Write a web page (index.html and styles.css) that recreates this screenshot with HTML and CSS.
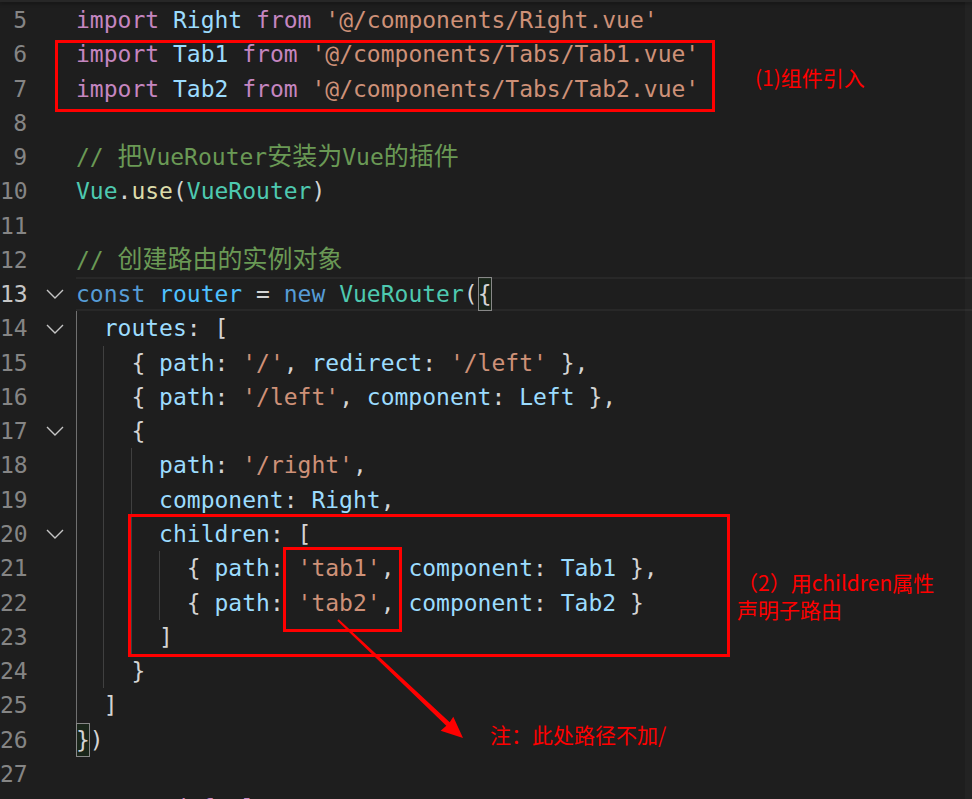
FILE: index.html
```html
<!DOCTYPE html>
<html lang="zh-CN">
<head>
<meta charset="utf-8">
<title>router.js</title>
<link rel="stylesheet" href="styles.css">
</head>
<body>
<div class="editor">
  <div class="lines">
    <div class="line"><span class="ln">5</span><span class="fold"></span><span class="src"><span class="k">import</span> <span class="v">Right</span> <span class="k">from</span> <span class="s">'@/components/Right.vue'</span></span></div>
    <div class="line"><span class="ln">6</span><span class="fold"></span><span class="src"><span class="k">import</span> <span class="v">Tab1</span> <span class="k">from</span> <span class="s">'@/components/Tabs/Tab1.vue'</span></span></div>
    <div class="line"><span class="ln">7</span><span class="fold"></span><span class="src"><span class="k">import</span> <span class="v">Tab2</span> <span class="k">from</span> <span class="s">'@/components/Tabs/Tab2.vue'</span></span></div>
    <div class="line"><span class="ln">8</span><span class="fold"></span><span class="src"></span></div>
    <div class="line"><span class="ln">9</span><span class="fold"></span><span class="src c">// <span class="cjk">把</span>VueRouter<span class="cjk">安装为</span>Vue<span class="cjk">的插件</span></span></div>
    <div class="line"><span class="ln">10</span><span class="fold"></span><span class="src"><span class="t">Vue</span>.<span class="f">use</span>(<span class="t">VueRouter</span>)</span></div>
    <div class="line"><span class="ln">11</span><span class="fold"></span><span class="src"></span></div>
    <div class="line"><span class="ln">12</span><span class="fold"></span><span class="src c">// <span class="cjk">创建路由的实例对象</span></span></div>
    <div class="line cur"><span class="ln">13</span><span class="fold"><svg class="chev" viewBox="0 0 18 10" width="18" height="10"><polyline points="1,1 9,9 17,1"/></svg></span><span class="src"><span class="b">const</span> <span class="cv">router</span> = <span class="b">new</span> <span class="t">VueRouter</span>(<span class="bm">{</span></span></div>
    <div class="line"><span class="ln">14</span><span class="fold"><svg class="chev" viewBox="0 0 18 10" width="18" height="10"><polyline points="1,1 9,9 17,1"/></svg></span><span class="src g1">  <span class="v">routes</span>: [</span></div>
    <div class="line"><span class="ln">15</span><span class="fold"></span><span class="src g2">    { <span class="v">path</span>: <span class="s">'/'</span>, <span class="v">redirect</span>: <span class="s">'/left'</span> },</span></div>
    <div class="line"><span class="ln">16</span><span class="fold"></span><span class="src g2">    { <span class="v">path</span>: <span class="s">'/left'</span>, <span class="v">component</span>: <span class="v">Left</span> },</span></div>
    <div class="line"><span class="ln">17</span><span class="fold"><svg class="chev" viewBox="0 0 18 10" width="18" height="10"><polyline points="1,1 9,9 17,1"/></svg></span><span class="src g2">    {</span></div>
    <div class="line"><span class="ln">18</span><span class="fold"></span><span class="src g3">      <span class="v">path</span>: <span class="s">'/right'</span>,</span></div>
    <div class="line"><span class="ln">19</span><span class="fold"></span><span class="src g3">      <span class="v">component</span>: <span class="v">Right</span>,</span></div>
    <div class="line"><span class="ln">20</span><span class="fold"><svg class="chev" viewBox="0 0 18 10" width="18" height="10"><polyline points="1,1 9,9 17,1"/></svg></span><span class="src g3">      <span class="v">children</span>: [</span></div>
    <div class="line"><span class="ln">21</span><span class="fold"></span><span class="src g4">        { <span class="v">path</span>: <span class="s">'tab1'</span>, <span class="v">component</span>: <span class="v">Tab1</span> },</span></div>
    <div class="line"><span class="ln">22</span><span class="fold"></span><span class="src g4">        { <span class="v">path</span>: <span class="s">'tab2'</span>, <span class="v">component</span>: <span class="v">Tab2</span> }</span></div>
    <div class="line"><span class="ln">23</span><span class="fold"></span><span class="src g3">      ]</span></div>
    <div class="line"><span class="ln">24</span><span class="fold"></span><span class="src g2">    }</span></div>
    <div class="line"><span class="ln">25</span><span class="fold"></span><span class="src g1">  ]</span></div>
    <div class="line"><span class="ln">26</span><span class="fold"></span><span class="src"><span class="bm">}</span>)</span></div>
    <div class="line"><span class="ln">27</span><span class="fold"></span><span class="src"></span></div>
    <div class="line"><span class="ln">28</span><span class="fold"></span><span class="src"><span class="k">export</span> <span class="k">default</span> <span class="cv">router</span></span></div>
  </div>

  <div class="topband"></div>
  <div class="vscroll"></div>

  <div class="box box1"></div>
  <div class="box box2"></div>
  <div class="box box3"></div>

  <div class="note note1">(1)组件引入</div>
  <div class="note note2">（2）用children属性<br>声明子路由</div>
  <div class="note note3">注：此处路径不加/</div>

  <svg class="arrow" viewBox="0 0 972 799" width="972" height="799">
    <polygon points="338.7,619.3 449.7,722.2 453.3,716.7 463,738 440.7,730.7 446.3,725.8 337.3,620.7"/>
  </svg>
</div>
</body>
</html>
```

FILE: styles.css
```css
* { box-sizing: border-box; }

html, body {
  margin: 0;
  background: #1e1e1e;
}

.editor {
  position: relative;
  width: 972px;
  height: 799px;
  overflow: hidden;
  background: #1e1e1e;
  font-family: "DejaVu Sans Mono", "Liberation Mono", monospace;
  font-size: 23px;
  color: #d4d4d4;
}

.lines {
  display: flex;
  flex-direction: column;
  padding-top: 3px;
}

.line {
  display: flex;
  height: 34.28px;
  line-height: 34.28px;
  flex: none;
}

.ln {
  flex: none;
  width: 27px;
  text-align: right;
  color: #858585;
  white-space: nowrap;
}

.cur .ln { color: #c6c6c6; }

.fold {
  flex: none;
  width: 49px;
  padding-left: 19px;
  display: flex;
  align-items: center;
}

.chev {
  display: block;
  fill: none;
  stroke: #c5c5c5;
  stroke-width: 1.4;
}

.src {
  flex: 1;
  white-space: pre;
  color: #d4d4d4;
  background-repeat: no-repeat;
}

.cur .src {
  box-shadow: inset 0 2px 0 #282828, inset 0 -2px 0 #282828;
}

/* indent guides */
.g1 {
  background-image: linear-gradient(#707070, #707070);
  background-size: 1px 100%;
  background-position: 0 0;
}
.g2 {
  background-image: linear-gradient(#707070, #707070), linear-gradient(#404040, #404040);
  background-size: 1px 100%, 1px 100%;
  background-position: 0 0, 27px 0;
}
.g3 {
  background-image: linear-gradient(#707070, #707070), linear-gradient(#404040, #404040), linear-gradient(#404040, #404040);
  background-size: 1px 100%, 1px 100%, 1px 100%;
  background-position: 0 0, 27px 0, 55px 0;
}
.g4 {
  background-image: linear-gradient(#707070, #707070), linear-gradient(#404040, #404040), linear-gradient(#404040, #404040), linear-gradient(#404040, #404040);
  background-size: 1px 100%, 1px 100%, 1px 100%, 1px 100%;
  background-position: 0 0, 27px 0, 55px 0, 83px 0;
}

/* syntax colours */
.k { color: #c586c0; }
.v { color: #9cdcfe; }
.s { color: #ce9178; }
.c { color: #6a9955; }
.t { color: #4ec9b0; }
.f { color: #dcdcaa; }
.b { color: #569cd6; }
.cv { color: #4fc1ff; }

.cjk {
  font-family: "Noto Sans CJK SC", sans-serif;
  font-size: 25px;
  line-height: 0;
}

.bm {
  display: inline-block;
  vertical-align: top;
  height: 34px;
  background: rgba(0, 100, 0, 0.12);
  box-shadow: inset 0 0 0 1px #888888;
}

/* chrome overlays */
.topband {
  position: absolute;
  left: 0;
  top: 0;
  width: 100%;
  height: 2px;
  background: #272727;
  box-shadow: 0 1px 4px rgba(0, 0, 0, 0.6);
}

.vscroll {
  position: absolute;
  right: 0;
  top: 2px;
  width: 7px;
  height: 797px;
  background: rgba(255, 255, 255, 0.025);
}

/* annotations */
.box {
  position: absolute;
  border: 3px solid #ff0000;
}
.box1 { left: 55px; top: 40px; width: 660px; height: 72px; }
.box2 { left: 128px; top: 514px; width: 602px; height: 143px; }
.box3 { left: 283px; top: 547px; width: 119px; height: 85px; }

.note {
  position: absolute;
  font-family: "Noto Sans CJK SC", sans-serif;
  font-size: 21px;
  line-height: 27px;
  color: #f00;
  white-space: nowrap;
}
.note1 { left: 755px; top: 64px; }
.note2 { left: 737px; top: 569px; }
.note3 { left: 490px; top: 721px; }

.arrow {
  position: absolute;
  left: 0;
  top: 0;
  fill: #ff0000;
  pointer-events: none;
}
```
